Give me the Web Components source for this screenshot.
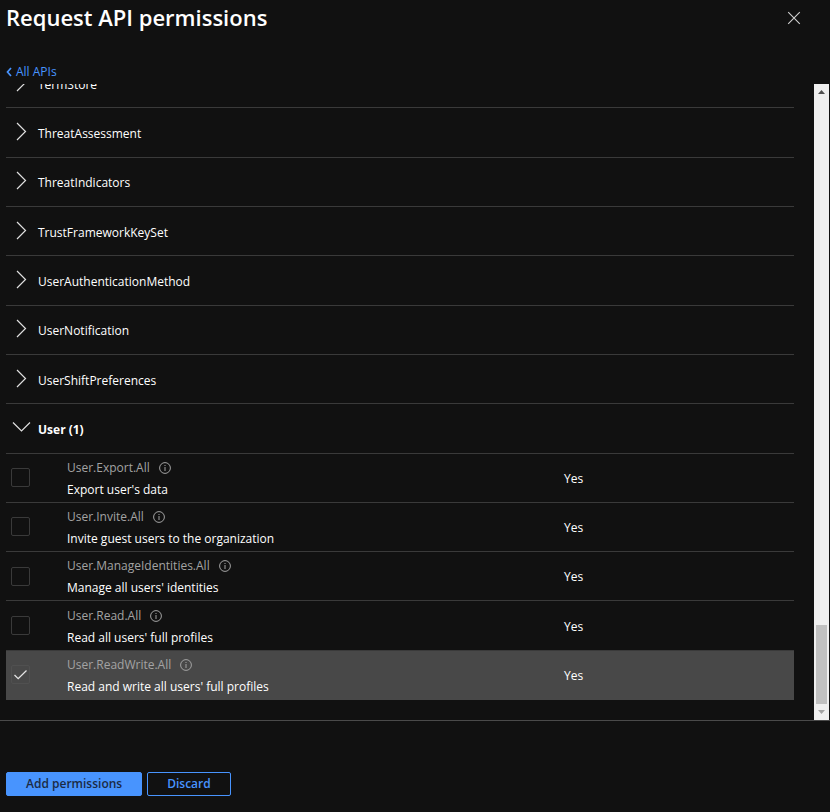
<!DOCTYPE html>
<html lang="en">
<head>
<meta charset="utf-8">
<meta name="viewport" content="width=device-width, initial-scale=1">
<title>Request API permissions</title>
<style>
  html, body { height: 100%; margin: 0; }
  body {
    background: #111;
    color: #fff;
    font: 12px/20px "Open Sans", "Noto Sans", sans-serif;
  }
</style>
</head>
<body>
<permissions-panel>
  <span slot="title">Request API permissions</span>
  <permission-group name="TermStore"></permission-group>
  <permission-group name="ThreatAssessment"></permission-group>
  <permission-group name="ThreatIndicators"></permission-group>
  <permission-group name="TrustFrameworkKeySet"></permission-group>
  <permission-group name="UserAuthenticationMethod"></permission-group>
  <permission-group name="UserNotification"></permission-group>
  <permission-group name="UserShiftPreferences"></permission-group>
  <permission-group name="User (1)" open></permission-group>
  <permission-table></permission-table>
  <action-button slot="actions" primary>Add permissions</action-button>
  <action-button slot="actions">Discard</action-button>
</permissions-panel>

<script>
class PermissionsPanel extends HTMLElement {
  constructor() {
    super();
    this.attachShadow({ mode: 'open' }).innerHTML = `
      <style>
        :host { display: flex; flex-direction: column; height: 100%; overflow: hidden; }
        header { display: flex; justify-content: space-between; align-items: flex-start; padding: 0 27px 0 6px; }
        h1 { margin: 0; font-size: 22px; line-height: 34px; font-weight: 600; }
        .close { display: flex; margin-top: 9px; padding: 2px; border: 0; background: none; color: #d0d0d0; cursor: pointer; }
        nav { padding: 28px 6px 2px; }
        a { display: flex; width: fit-content; align-items: center; gap: 4px; color: #4894fe; text-decoration: none; }
        .view { flex: 1; min-height: 0; display: flex; border-bottom: 1px solid #4a4a4a; }
        .clip { flex: 1; min-width: 0; overflow: hidden; display: flex; flex-direction: column; padding: 0 20px 20px 6px; }
        .list { flex: 1; display: flex; flex-direction: column; margin-top: -25px; }
        footer { display: flex; gap: 5px; padding: 51px 6px 16px; }
      </style>
      <header>
        <h1><slot name="title"></slot></h1>
        <button class="close" aria-label="Close">
          <svg width="14" height="14" viewBox="0 0 14 14" fill="none" stroke="currentColor" stroke-width="1.1"><path d="M1.2 1.2l11.6 11.6M12.8 1.2L1.2 12.8"/></svg>
        </button>
      </header>
      <nav><a href="#apis"><svg width="6" height="10" viewBox="0 0 6 10" fill="none" stroke="currentColor" stroke-width="1.7"><path d="M5 1L1.5 5 5 9"/></svg>All APIs</a></nav>
      <div class="view">
        <div class="clip"><div class="list"><slot></slot></div></div>
        <scroll-rail></scroll-rail>
      </div>
      <footer><slot name="actions"></slot></footer>`;
  }
}

class PermissionGroup extends HTMLElement {
  connectedCallback() {
    if (this.shadowRoot) return;
    const open = this.hasAttribute('open');
    const icon = open ? 'M1 4.5L9.5 13l8.5-8.5' : 'M5 1l8.5 8.5L5 18';
    this.attachShadow({ mode: 'open' }).innerHTML = `
      <style>
        :host { display: flex; flex: 1; min-height: 48px; box-shadow: inset 0 -1px #3a3a3a; }
        button {
          flex: 1; display: flex; align-items: center; gap: 6px; padding: 0 0 0 6px;
          border: 0; background: none; color: inherit; font: inherit; text-align: left; cursor: pointer;
        }
        :host([open]) { font-weight: 700; }
        svg { margin-bottom: 3px; }
        span { padding-top: 2px; }
      </style>
      <button aria-expanded="${open}">
        <svg width="20" height="19" viewBox="0 0 20 19" fill="none" stroke="#e0e0e0" stroke-width="1.2"><path d="${icon}"/></svg>
        <span>${this.getAttribute('name')}</span>
      </button>`;
  }
}

class PermissionTable extends HTMLElement {
  constructor() {
    super();
    const rows = [
      ['User.Export.All', "Export user's data"],
      ['User.Invite.All', 'Invite guest users to the organization'],
      ['User.ManageIdentities.All', "Manage all users' identities"],
      ['User.Read.All', "Read all users' full profiles"],
      ['User.ReadWrite.All', "Read and write all users' full profiles", true]
    ];
    this.attachShadow({ mode: 'open' }).innerHTML = `
      <style>
        :host { display: flex; flex: 5; }
        table { flex: 1; height: 100%; border-collapse: collapse; table-layout: fixed; }
        th, td { padding: 0; text-align: left; font-weight: 400; vertical-align: middle; }
        tr { border-bottom: 1px solid #3a3a3a; }
        tr.on { background: #484848; border-color: #484848; }
        .tick { width: 61px; }
        .admin { width: 230px; padding-top: 2px; }
        input {
          appearance: none; display: block; box-sizing: border-box; width: 19px; height: 19px; margin: 0 0 0 5px;
          border: 1px solid #3a3a3a; border-radius: 2px;
        }
        input:checked {
          border-color: #505050;
          background: url("data:image/svg+xml,%3Csvg xmlns='http://www.w3.org/2000/svg' viewBox='0 0 17 17' fill='none' stroke='%23e4e4e4' stroke-width='1.3'%3E%3Cpath d='M2.5 9l3.7 3.7L14.5 4.5'/%3E%3C/svg%3E") center / 17px no-repeat;
        }
        label { display: block; line-height: 20px; padding-top: 1px; }
        .name { display: flex; align-items: center; gap: 9px; color: #a3a3a3; line-height: 22px; margin-bottom: 1px; }
        svg { display: block; }
      </style>
      <table aria-label="User permissions"><tbody>${rows.map(([name, text, on], i) => `
        <tr class="${on ? 'on' : ''}">
          <td class="tick"><input type="checkbox" id="p${i}" ${on ? 'checked' : ''}></td>
          <th scope="row"><label for="p${i}"><span class="name">${name}<svg width="12" height="12" viewBox="0 0 12 12" fill="none" stroke="#a3a3a3"><circle cx="6" cy="6" r="5.4"/><path d="M6 5v4M6 3v1"/></svg></span>${text}</label></th>
          <td class="admin">Yes</td>
        </tr>`).join('')}
      </tbody></table>`;
  }
}

class ScrollRail extends HTMLElement {
  constructor() {
    super();
    this.attachShadow({ mode: 'open' }).innerHTML = `
      <style>
        :host { display: flex; flex-direction: column; width: 15px; margin-right: 1px; background: #f0f0f0; }
        svg { display: block; margin: 6px auto; }
        .track { flex: 1; display: flex; flex-direction: column; justify-content: flex-end; }
        .thumb { height: 13%; margin: 0 2px; background: #c1c1c1; }
      </style>
      <svg width="7" height="4" viewBox="0 0 7 4"><path d="M3.5 0L7 4H0z" fill="#505050"/></svg>
      <div class="track"><div class="thumb"></div></div>
      <svg width="7" height="4" viewBox="0 0 7 4"><path d="M0 0h7L3.5 4z" fill="#a3a3a3"/></svg>`;
  }
}

class ActionButton extends HTMLElement {
  constructor() {
    super();
    this.attachShadow({ mode: 'open' }).innerHTML = `
      <style>
        :host { display: block; }
        button {
          display: block; height: 24px; padding: 0 19px; border: 1px solid #4894fe; border-radius: 2px;
          background: none; color: #4894fe; font: inherit; font-weight: 600; line-height: 20px; cursor: pointer;
        }
        :host([primary]) button { background: #4894fe; color: #1b2b45; }
      </style>
      <button><slot></slot></button>`;
  }
}

customElements.define('scroll-rail', ScrollRail);
customElements.define('permission-group', PermissionGroup);
customElements.define('permission-table', PermissionTable);
customElements.define('action-button', ActionButton);
customElements.define('permissions-panel', PermissionsPanel);
</script>
</body>
</html>
